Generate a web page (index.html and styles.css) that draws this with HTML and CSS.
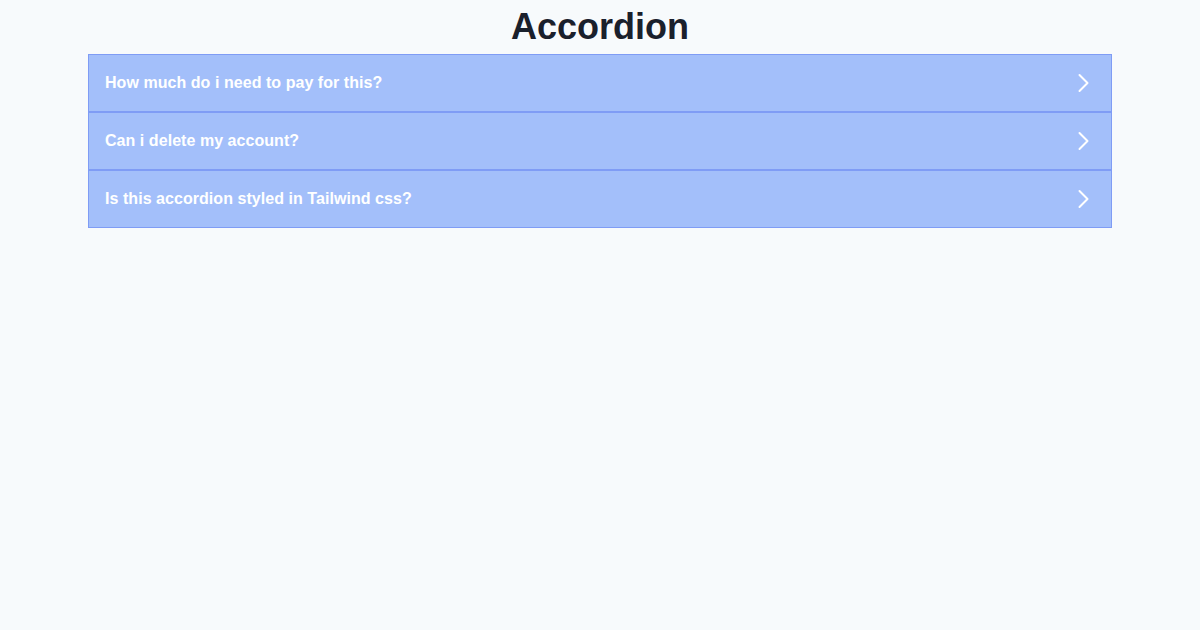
FILE: index.html
```html
<!DOCTYPE html>
<html lang="en">
<head>
<meta charset="utf-8">
<title>Accordion</title>
<link rel="stylesheet" href="styles.css">
</head>
<body>
<main class="page">
  <h1 class="title">Accordion</h1>
  <div class="accordion">
    <div class="item">
      <span class="question">How much do i need to pay for this?</span>
      <svg class="chevron" width="24" height="24" viewBox="0 0 24 24"><polyline points="8.5,4 16.5,12 8.5,20" fill="none" stroke="#fff" stroke-width="2" stroke-linecap="round" stroke-linejoin="round"/></svg>
    </div>
    <div class="item">
      <span class="question">Can i delete my account?</span>
      <svg class="chevron" width="24" height="24" viewBox="0 0 24 24"><polyline points="8.5,4 16.5,12 8.5,20" fill="none" stroke="#fff" stroke-width="2" stroke-linecap="round" stroke-linejoin="round"/></svg>
    </div>
    <div class="item">
      <span class="question">Is this accordion styled in Tailwind css?</span>
      <svg class="chevron" width="24" height="24" viewBox="0 0 24 24"><polyline points="8.5,4 16.5,12 8.5,20" fill="none" stroke="#fff" stroke-width="2" stroke-linecap="round" stroke-linejoin="round"/></svg>
    </div>
  </div>
</main>
</body>
</html>
```
FILE: styles.css
```css
html, body {
  margin: 0;
  padding: 0;
  background: #f7fafc;
  font-family: "Liberation Sans", Arial, sans-serif;
}
.page {
  width: 1024px;
  margin: 0 auto;
}
.title {
  margin: 0;
  height: 54px;
  line-height: 54px;
  font-size: 36px;
  font-weight: 700;
  color: #1a202c;
  text-align: center;
}
.accordion {
  display: flex;
  flex-direction: column;
}
.item {
  display: flex;
  align-items: center;
  justify-content: space-between;
  height: 56px;
  padding: 0 16px;
  background: #a3bffa;
  border: 1px solid #7f9cf5;
}
.question {
  font-size: 16px;
  line-height: 24px;
  font-weight: 700;
  letter-spacing: 0.05px;
  color: #fff;
}
.chevron {
  display: block;
}
```
